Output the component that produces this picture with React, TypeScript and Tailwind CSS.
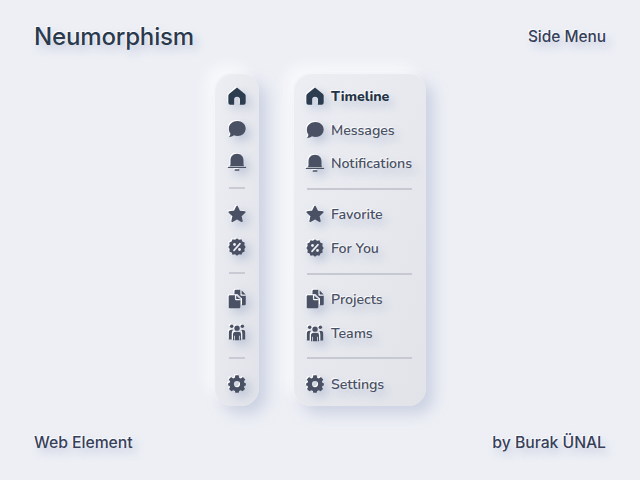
const iconFx =
  "[filter:drop-shadow(-0.5px_-0.5px_0.5px_#ffffff)_drop-shadow(5px_5px_5px_rgba(130,145,185,0.38))]";
const textFx =
  "[text-shadow:-1px_-1px_1px_#ffffff,4px_5px_8px_rgba(130,145,185,0.4)]";

function Home() {
  return (
    <path d="M12 1.8 L21.2 9.2 Q22.4 10.2 22.4 11.8 V20 Q22.4 22.4 20 22.4 H15.4 V16 Q15.4 12.8 12 12.8 Q8.6 12.8 8.6 16 V22.4 H4 Q1.6 22.4 1.6 20 V11.8 Q1.6 10.2 2.8 9.2 Z" />
  );
}

function Chat() {
  return (
    <path d="M12.6 2.4 C18.2 2.4 22.4 6.4 22.4 11.4 C22.4 16.6 18.2 20.4 12.8 20.4 C11 20.4 9.6 20.1 8.3 19.6 C6.8 20.8 4.8 21.6 2.4 21.8 C3.5 20.4 4.1 18.9 4.1 17.4 C2.8 15.8 2.2 13.7 2.2 11.4 C2.2 6.4 6.8 2.4 12.6 2.4 Z" />
  );
}

function Bell() {
  return (
    <>
      <path d="M12 2 C16.8 2 19.8 5.4 19.8 10 V14.6 Q19.8 16.4 21 17 H3 Q4.2 16.4 4.2 14.6 V10 C4.2 5.4 7.2 2 12 2 Z" />
      <rect x="1" y="17.8" width="22" height="1.5" rx="0.75" />
      <rect x="9" y="20.6" width="6" height="2" rx="1" />
    </>
  );
}

function Star() {
  return (
    <path
      strokeLinejoin="round"
      stroke="currentColor"
      strokeWidth="2"
      d="M12 3 L14.8 8.9 L21.3 9.7 L16.5 14.2 L17.8 20.6 L12 17.4 L6.2 20.6 L7.5 14.2 L2.7 9.7 L9.2 8.9 Z"
    />
  );
}

function Percent() {
  return (
    <>
      <path d="M12 1.6 L14.4 3.2 L17.3 2.7 L18.5 5.4 L21.2 6.6 L20.8 9.5 L22.4 12 L20.8 14.5 L21.2 17.4 L18.5 18.6 L17.3 21.3 L14.4 20.8 L12 22.4 L9.6 20.8 L6.7 21.3 L5.5 18.6 L2.8 17.4 L3.2 14.5 L1.6 12 L3.2 9.5 L2.8 6.6 L5.5 5.4 L6.7 2.7 L9.6 3.2 Z" />
      <path d="M8.4 16 L15.6 8" stroke="#eceef3" strokeWidth="2" strokeLinecap="round" />
      <circle cx="9" cy="9" r="1.7" fill="#eceef3" />
      <circle cx="15" cy="15" r="1.7" fill="#eceef3" />
    </>
  );
}

function Docs() {
  return (
    <>
      <path d="M10.5 1 H16 V6.5 Q16 8 17.5 8 H22.5 V18 Q22.5 19.5 21 19.5 H18 V11.5 L12.5 6 H9 V2.5 Q9 1 10.5 1 Z" />
      <path d="M17.5 1.4 L22.3 6.5 H18.5 Q17.5 6.5 17.5 5.5 Z" />
      <path d="M3.5 7.5 H9.5 V12 Q9.5 13.5 11 13.5 H16 V21.5 Q16 23 14.5 23 H3.5 Q2 23 2 21.5 V9 Q2 7.5 3.5 7.5 Z" />
      <path d="M11 7.8 L15.8 12 H12 Q11 12 11 11 Z" />
    </>
  );
}

function Team() {
  return (
    <>
      <circle cx="12" cy="7.4" r="3.2" />
      <path d="M7.2 22 V15 Q7.2 11.6 10.4 11.6 H13.6 Q16.8 11.6 16.8 15 V22 H15.2 V16.5 H14.4 V22 H9.6 V16.5 H8.8 V22 Z" />
      <circle cx="5.6" cy="5.2" r="2.1" />
      <circle cx="18.4" cy="5.2" r="2.1" />
      <path d="M2.2 21 V12.5 Q2.2 9.2 5 9.2 H7.2 Q5.6 11 5.6 14 V21 Z" />
      <path d="M21.8 21 V12.5 Q21.8 9.2 19 9.2 H16.8 Q18.4 11 18.4 14 V21 Z" />
    </>
  );
}

function Gear() {
  return (
    <path
      fillRule="evenodd"
      d="M10 1.6 H14 L14.6 4.4 L16.6 5.3 L19.1 3.7 L21.9 6.5 L20.3 9 L21.2 10.8 L22.6 11.2 V13.8 L21.2 14.2 L20.3 15.6 L21.6 18 L18.8 20.8 L16.4 19.5 L14.6 20.3 L14 22.6 H10 L9.4 20.3 L7.6 19.5 L5.2 20.8 L2.4 18 L3.7 15.6 L2.8 14.2 L1.4 13.8 V11.2 L2.8 10.8 L3.7 9 L2.1 6.5 L4.9 3.7 L7.4 5.3 L9.4 4.4 Z M12 8.4 A3.7 3.7 0 1 0 12 15.8 A3.7 3.7 0 1 0 12 8.4 Z"
    />
  );
}

const groups = [
  [
    { label: "Timeline", Icon: Home, active: true },
    { label: "Messages", Icon: Chat },
    { label: "Notifications", Icon: Bell },
  ],
  [
    { label: "Favorite", Icon: Star },
    { label: "For You", Icon: Percent },
  ],
  [
    { label: "Projects", Icon: Docs },
    { label: "Teams", Icon: Team },
  ],
  [{ label: "Settings", Icon: Gear }],
];

const panel =
  "bg-gradient-to-br from-[#eceef3] to-[#e1e3e9] shadow-[8px_8px_14px_rgba(178,188,214,0.55),-8px_-8px_14px_rgba(255,255,255,0.65),inset_1px_1px_1px_rgba(255,255,255,0.5)]";

function MenuIcon({ Icon, active }: { Icon: () => React.ReactNode; active?: boolean }) {
  return (
    <svg
      viewBox="0 0 24 24"
      fill="currentColor"
      className={`w-[20px] h-[20px] shrink-0 ${iconFx} ${active ? "text-[#2d3d50]" : "text-[#4a5165]"}`}
    >
      <Icon />
    </svg>
  );
}

function IconRail() {
  return (
    <nav className={`w-[45px] h-[333px] rounded-[18px] pt-[6.5px] flex flex-col items-center ${panel}`}>
      {groups.map((group, i) => (
        <div key={i} className="flex flex-col items-center w-full">
          {i > 0 && <div className="w-[16px] h-[2px] bg-[#c8cbd3] my-[8.5px]" />}
          {group.map((item) => (
            <div key={item.label} className="h-[33px] flex items-center justify-center">
              <MenuIcon Icon={item.Icon} active={item.active} />
            </div>
          ))}
        </div>
      ))}
    </nav>
  );
}

function LabelMenu() {
  return (
    <nav className={`w-[133px] h-[333px] rounded-[18px] pt-[6.5px] px-[14px] flex flex-col ${panel}`}>
      {groups.map((group, i) => (
        <div key={i} className="flex flex-col">
          {i > 0 && <div className="h-[2px] bg-[#c6c9d1] my-[7.7px]" />}
          {group.map((item) => (
            <div key={item.label} className="h-[33.6px] flex items-center gap-[6px] -ml-[2px]">
              <MenuIcon Icon={item.Icon} active={item.active} />
              <span
                className={`font-[Nunito,Lato,sans-serif] text-[14.1px] pt-[1px] whitespace-nowrap ${textFx} ${
                  item.active ? "font-extrabold text-[#243447]" : "font-semibold text-[#485064]"
                }`}
              >
                {item.label}
              </span>
            </div>
          ))}
        </div>
      ))}
    </nav>
  );
}

export default function App() {
  return (
    <div className="w-[640px] h-[480px] overflow-hidden bg-[#edeff5] font-[Inter,sans-serif] flex flex-col">
      <header className="h-[73px] px-[34px] flex items-center justify-between">
        <h1 className={`text-[24px] tracking-[-0.15px] font-medium text-[#2a3a4d] ${textFx}`}>Neumorphism</h1>
        <span className={`text-[15.4px] font-medium text-[#35405a] ${textFx}`}>Side Menu</span>
      </header>
      <main className="flex justify-center gap-[34px]">
        <IconRail />
        <LabelMenu />
      </main>
      <footer className="px-[34px] pt-[25px] flex items-center justify-between">
        <span className={`text-[15.7px] font-medium text-[#35405a] ${textFx}`}>Web Element</span>
        <span className={`text-[15.7px] font-medium text-[#35405a] ${textFx}`}>by Burak ÜNAL</span>
      </footer>
    </div>
  );
}
